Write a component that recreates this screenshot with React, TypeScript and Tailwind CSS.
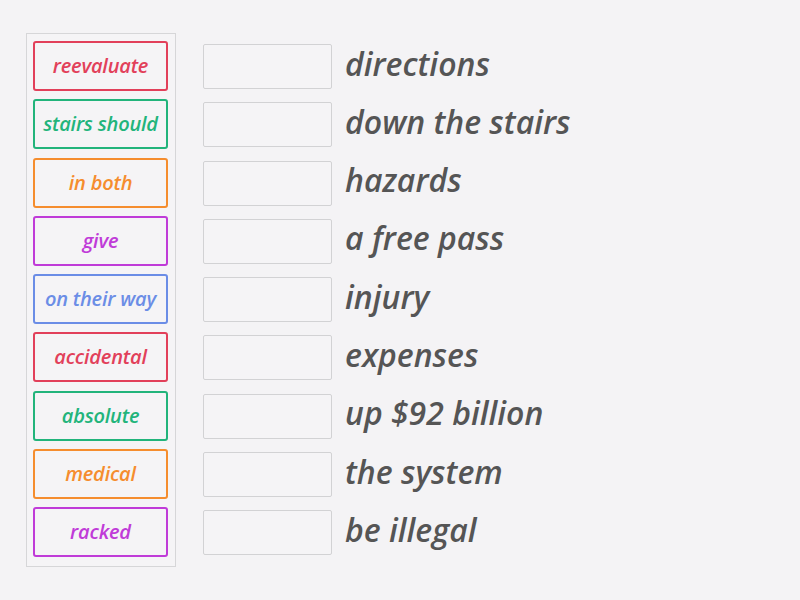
import React from "react";

const tiles: { t: string; c: string }[] = [
  { t: "reevaluate", c: "#e2405a" },
  { t: "stairs should", c: "#22b47b" },
  { t: "in both", c: "#f58d2e" },
  { t: "give", c: "#c03bd8" },
  { t: "on their way", c: "#6b8de6" },
  { t: "accidental", c: "#e2405a" },
  { t: "absolute", c: "#22b47b" },
  { t: "medical", c: "#f58d2e" },
  { t: "racked", c: "#c03bd8" },
];

const phrases = [
  "directions",
  "down the stairs",
  "hazards",
  "a free pass",
  "injury",
  "expenses",
  "up $92 billion",
  "the system",
  "be illegal",
];

export default function App() {
  const font = { fontFamily: '"Open Sans", "Noto Sans", sans-serif' };
  return (
    <div className="w-[800px] h-[600px] bg-[#f4f3f5] flex items-start" style={font}>
      <div className="ml-[26px] mt-[33px] w-[150px] h-[534px] border border-[#d6d6d8] bg-[#f5f4f6] px-[6px] pt-[7px] flex flex-col gap-[8.3px]">
        {tiles.map((x, i) => (
          <div
            key={i}
            className="h-[50px] w-[135px] rounded-[3px] border-2 flex items-center justify-center italic font-semibold text-[20px] tracking-[-0.2px] whitespace-nowrap"
            style={{ borderColor: x.c, color: x.c }}
          >
            {x.t}
          </div>
        ))}
      </div>
      <div className="ml-[27px] mt-[44px] flex flex-col gap-[13.3px]">
        {phrases.map((p, i) => (
          <div key={i} className="flex items-center h-[45px]">
            <div className="w-[129px] h-[45px] border border-[#d2d2d4] rounded-[2px] bg-[#f5f4f6]" />
            <div className="ml-[13px] text-[32px] italic font-semibold text-[#555555] leading-none -mt-[6px] whitespace-nowrap">
              {p}
            </div>
          </div>
        ))}
      </div>
    </div>
  );
}
